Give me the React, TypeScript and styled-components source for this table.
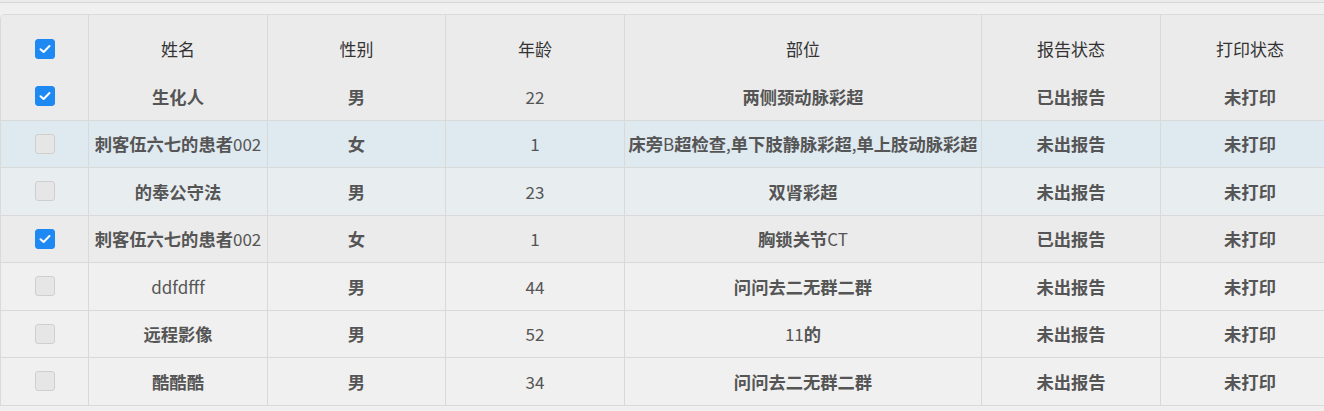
import styled, { createGlobalStyle } from "styled-components";

const GlobalStyle = createGlobalStyle`
  html, body {
    margin: 0;
    padding: 0;
    background: #f0f0f0;
  }
  body {
    font-family: "Noto Sans CJK SC", "Noto Sans", sans-serif;
  }
`;

const COLUMNS = "87px 179px 178px 179px 357px 179px 179px";

const Page = styled.div`
  width: 1324px;
  height: 411px;
  overflow: hidden;
  background: #f0f0f0;
`;

const TopStrip = styled.div`
  height: 2px;
  background: #ebebeb;
  border-bottom: 1px solid #d6d6d6;
`;

const TableWrap = styled.div`
  margin-top: 11px;
  width: 1340px;
  border-top: 1px solid #dadada;
  border-left: 1px solid #dadada;
  border-top-left-radius: 5px;
  overflow: hidden;
`;

type Tone = "checked" | "hover" | "stripe" | "plain";

const toneBg: Record<Tone, string> = {
  checked: "#ebebeb",
  hover: "#dfe9f0",
  stripe: "#e8edf0",
  plain: "#f0f0f0",
};

const HeadRow = styled.div`
  display: grid;
  grid-template-columns: ${COLUMNS};
  height: 58px;
  background: #ebebeb;
  color: #333;
  font-weight: 400;
`;

const Row = styled.div<{ $tone: Tone }>`
  display: grid;
  grid-template-columns: ${COLUMNS};
  height: 47.5px;
  box-sizing: border-box;
  border-bottom: 1px solid #d9d9d9;
  background: ${(p) => toneBg[p.$tone]};
  color: #555;
  font-weight: 700;
`;

const Cell = styled.div<{ $head?: boolean }>`
  display: flex;
  align-items: center;
  justify-content: center;
  box-sizing: border-box;
  border-left: 1px solid #d9d9d9;
  font-size: ${(p) => (p.$head ? "17px" : "17.3px")};
  line-height: 1;
  white-space: nowrap;
  padding-top: ${(p) => (p.$head ? "9px" : "0")};

  &:first-child {
    border-left: none;
  }
`;

const Latin = styled.span`
  font-weight: 400;
  font-size: 17px;
`;

const Box = styled.span<{ $on: boolean }>`
  width: 20px;
  height: 20px;
  box-sizing: border-box;
  border-radius: 3px;
  display: inline-flex;
  align-items: center;
  justify-content: center;
  background: ${(p) => (p.$on ? "#1e88f3" : "#e6e6e6")};
  border: 1px solid ${(p) => (p.$on ? "#1e88f3" : "#cfcfcf")};
`;

function Check({ on }: { on: boolean }) {
  return (
    <Box $on={on}>
      {on && (
        <svg width="12" height="10" viewBox="0 0 12 10">
          <path
            d="M1.5 5.2 L4.6 8 L10.5 2"
            fill="none"
            stroke="#fff"
            strokeWidth="2"
            strokeLinecap="round"
            strokeLinejoin="round"
          />
        </svg>
      )}
    </Box>
  );
}

// ascii runs render at regular weight, like the original font fallback
function Mixed({ text }: { text: string }) {
  const parts = text.split(/([\x00-\x7F]+)/).filter(Boolean);
  return (
    <>
      {parts.map((p, i) =>
        /^[\x00-\x7F]+$/.test(p) ? <Latin key={i}>{p}</Latin> : <span key={i}>{p}</span>
      )}
    </>
  );
}

const headers = ["姓名", "性别", "年龄", "部位", "报告状态", "打印状态"];

const rows: { on: boolean; tone: Tone; cells: string[] }[] = [
  { on: true, tone: "checked", cells: ["生化人", "男", "22", "两侧颈动脉彩超", "已出报告", "未打印"] },
  { on: false, tone: "hover", cells: ["刺客伍六七的患者002", "女", "1", "床旁B超检查,单下肢静脉彩超,单上肢动脉彩超", "未出报告", "未打印"] },
  { on: false, tone: "stripe", cells: ["的奉公守法", "男", "23", "双肾彩超", "未出报告", "未打印"] },
  { on: true, tone: "checked", cells: ["刺客伍六七的患者002", "女", "1", "胸锁关节CT", "已出报告", "未打印"] },
  { on: false, tone: "plain", cells: ["ddfdfff", "男", "44", "问问去二无群二群", "未出报告", "未打印"] },
  { on: false, tone: "plain", cells: ["远程影像", "男", "52", "11的", "未出报告", "未打印"] },
  { on: false, tone: "plain", cells: ["酷酷酷", "男", "34", "问问去二无群二群", "未出报告", "未打印"] },
];

export default function App() {
  return (
    <Page>
      <GlobalStyle />
      <TopStrip />
      <TableWrap>
        <HeadRow>
          <Cell $head>
            <Check on />
          </Cell>
          {headers.map((h) => (
            <Cell $head key={h}>
              {h}
            </Cell>
          ))}
        </HeadRow>
        {rows.map((r, i) => (
          <Row $tone={r.tone} key={i}>
            <Cell>
              <Check on={r.on} />
            </Cell>
            {r.cells.map((c, j) => (
              <Cell key={j}>
                <Mixed text={c} />
              </Cell>
            ))}
          </Row>
        ))}
      </TableWrap>
    </Page>
  );
}
